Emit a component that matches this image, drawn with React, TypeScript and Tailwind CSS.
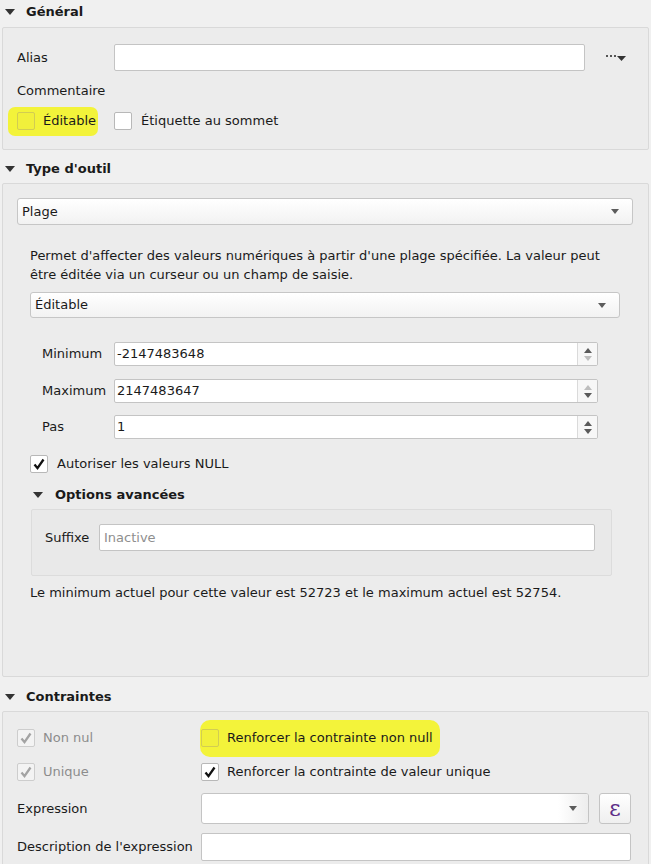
import React from 'react';

const Tri = ({ className = '' }: { className?: string }) => (
  <svg width="10" height="6" viewBox="0 0 10 6" className={className}>
    <path d="M0 0H10L5 6Z" fill="currentColor" />
  </svg>
);

const SmallTri = ({ up = false, className = '' }: { up?: boolean; className?: string }) => (
  <svg width="8" height="5" viewBox="0 0 8 5" className={className}>
    <path d={up ? 'M0 5H8L4 0Z' : 'M0 0H8L4 5Z'} fill="currentColor" />
  </svg>
);

function Header({ title }: { title: string }) {
  return (
    <div className="flex items-center">
      <Tri className="ml-[5px] text-[#333]" />
      <span className="ml-[11px] font-bold text-[13px]">{title}</span>
    </div>
  );
}

function Check({ checked = false, disabled = false, hl = false }: { checked?: boolean; disabled?: boolean; hl?: boolean }) {
  const box = hl
    ? 'bg-[#f1f03c] border-[#d2cd52]'
    : disabled
      ? 'bg-[#f3f3f3] border-[#cdcdcd]'
      : 'bg-white border-[#b8b8b8]';
  return (
    <span className={`w-[18px] h-[18px] border rounded-[2px] flex items-center justify-center shrink-0 ${box}`}>
      {checked && (
        <svg width="14" height="14" viewBox="0 0 14 14">
          <path d="M2.5 7.5L5.5 11.2L11.5 2.5" fill="none" stroke={disabled ? '#a3a3a3' : '#111'} strokeWidth="2.3" />
        </svg>
      )}
    </span>
  );
}

function Combo({ value, className = '' }: { value: string; className?: string }) {
  return (
    <div className={`flex items-center justify-between pl-[4px] pr-[13px] border border-[#c6c6c6] rounded-[3px] bg-gradient-to-b from-white to-[#f2f2f2] ${className}`}>
      <span>{value}</span>
      <SmallTri className="text-[#5c5c5c]" />
    </div>
  );
}

function Spin({ value, up, down }: { value: string; up: boolean; down: boolean }) {
  return (
    <div className="w-[484px] h-[24px] flex border border-[#c4c4c4] rounded-[2px] bg-white overflow-hidden">
      <span className="flex-1 pl-[2px] leading-[22px]">{value}</span>
      <div className="w-[20px] border-l border-[#dadada] bg-[#f7f7f7] flex flex-col items-center justify-center gap-[3px]">
        <SmallTri up className={up ? 'text-[#5a5a5a]' : 'text-[#bdbdbd]'} />
        <SmallTri className={down ? 'text-[#5a5a5a]' : 'text-[#bdbdbd]'} />
      </div>
    </div>
  );
}

export default function App() {
  return (
    <div className="w-[651px] h-[864px] overflow-hidden bg-[#f0f0f0] text-[13px] text-[#1a1a1a] font-['DejaVu_Sans',sans-serif]">
      {/* Général */}
      <div className="h-[27px] pb-[3px] flex items-center"><Header title="Général" /></div>
      <div className="mx-[2px] h-[123px] border border-[#d9d9d9] rounded-[2px] bg-[#ececec] pl-[14px] pt-[16px]">
        <div className="flex items-center h-[27px]">
          <span className="w-[97px]">Alias</span>
          <div className="w-[471px] h-[27px] bg-white border border-[#c4c4c4] rounded-[2px]" />
          <div className="ml-[21px] flex items-start">
            <span className="flex gap-[2px]">
              <span className="w-[2px] h-[2px] bg-[#555]" />
              <span className="w-[2px] h-[2px] bg-[#555]" />
              <span className="w-[2px] h-[2px] bg-[#555]" />
            </span>
            <svg width="9" height="5" viewBox="0 0 9 5" className="ml-[1px] mt-[1px]"><path d="M0 0H9L4.5 5Z" fill="#333" /></svg>
          </div>
        </div>
        <div className="mt-[10px] h-[20px] flex items-center">Commentaire</div>
        <div className="mt-[10px] h-[20px] flex items-center">
          <div className="w-[97px] flex items-center">
            <span className="-ml-[9px] pl-[9px] pr-[2px] h-[29px] flex items-center gap-[8px] bg-[#f3f33a] rounded-[7px]">
              <Check hl />
              <span>Éditable</span>
            </span>
          </div>
          <Check />
          <span className="ml-[9px]">Étiquette au sommet</span>
        </div>
      </div>

      {/* Type d'outil */}
      <div className="h-[33px] pt-[5px] flex items-center"><Header title="Type d'outil" /></div>
      <div className="mx-[2px] h-[494px] border border-[#d9d9d9] rounded-[2px] bg-[#ececec] pl-[14px] pr-[15px] pt-[14px]">
        <Combo value="Plage" className="h-[27px]" />
        <div className="px-[13px]">
          <p className="mt-[21px] leading-[19px] whitespace-nowrap">
            Permet d'affecter des valeurs numériques à partir d'une plage spécifiée. La valeur peut
            <br />
            être éditée via un curseur ou un champ de saisie.
          </p>
          <Combo value="Éditable" className="mt-[8px] h-[26px] pr-[12px]" />
          <div className="mt-[24px] pl-[12px] flex items-center">
            <span className="w-[72px]">Minimum</span>
            <Spin value="-2147483648" up down={false} />
          </div>
          <div className="mt-[13px] pl-[12px] flex items-center">
            <span className="w-[72px]">Maximum</span>
            <Spin value="2147483647" up={false} down />
          </div>
          <div className="mt-[12px] pl-[12px] flex items-center">
            <span className="w-[72px]">Pas</span>
            <Spin value="1" up down />
          </div>
          <div className="mt-[15px] h-[20px] flex items-center">
            <Check checked />
            <span className="ml-[9px]">Autoriser les valeurs NULL</span>
          </div>
          <div className="mt-[11px] h-[20px] flex items-center">
            <Tri className="ml-[3px] text-[#333]" />
            <span className="ml-[12px] font-bold text-[13px]">Options avancées</span>
          </div>
          <div className="mt-[4px] ml-[1px] mr-[8px] h-[67px] border border-[#dcdcdc] rounded-[2px] bg-[#e9e9e9] pl-[13px] pr-[16px] pt-[14px]">
            <div className="flex items-center h-[27px]">
              <span className="w-[54px]">Suffixe</span>
              <div className="flex-1 h-[27px] bg-white border border-[#c4c4c4] rounded-[2px] pl-[4px] flex items-center text-[#8e8e8e]">Inactive</div>
            </div>
          </div>
          <div className="mt-[7px] h-[20px] flex items-center whitespace-nowrap">
            Le minimum actuel pour cette valeur est 52723 et le maximum actuel est 52754.
          </div>
        </div>
      </div>

      {/* Contraintes */}
      <div className="h-[34px] pt-[6px] flex items-center"><Header title="Contraintes" /></div>
      <div className="mx-[2px] h-[200px] border border-[#d9d9d9] rounded-[2px] bg-[#ececec] pl-[14px] pt-[16px]">
        <div className="h-[20px] flex items-center">
          <div className="w-[184px] flex items-center">
            <Check checked disabled />
            <span className="ml-[8px] text-[#8c8c8c]">Non nul</span>
          </div>
          <span className="-ml-[1px] pl-[1px] pr-[7px] h-[37px] flex items-center gap-[8px] bg-[#f3f33a] rounded-[10px]">
            <Check hl />
            <span>Renforcer la contrainte non null</span>
          </span>
        </div>
        <div className="mt-[14px] h-[20px] flex items-center">
          <div className="w-[184px] flex items-center">
            <Check checked disabled />
            <span className="ml-[8px] text-[#8c8c8c]">Unique</span>
          </div>
          <Check checked />
          <span className="ml-[8px]">Renforcer la contrainte de valeur unique</span>
        </div>
        <div className="mt-[11px] h-[31px] flex items-center">
          <span className="w-[184px]">Expression</span>
          <div className="w-[388px] h-[31px] flex border border-[#c4c4c4] rounded-[3px] bg-white overflow-hidden">
            <div className="flex-1" />
            <div className="w-[30px] flex items-center justify-center bg-gradient-to-r from-white to-[#ededed]">
              <SmallTri className="text-[#5c5c5c]" />
            </div>
          </div>
          <div className="ml-[10px] w-[32px] h-[31px] border border-[#c4c4c4] rounded-[3px] bg-gradient-to-b from-white to-[#efefef] flex items-center justify-center text-[22px] leading-none text-[#5d2e87] font-['DejaVu_Serif',serif]">
            ε
          </div>
        </div>
        <div className="mt-[9px] h-[28px] flex items-center">
          <span className="w-[184px] whitespace-nowrap">Description de l'expression</span>
          <div className="w-[430px] h-[28px] bg-white border border-[#c4c4c4] rounded-[2px]" />
        </div>
      </div>
    </div>
  );
}
